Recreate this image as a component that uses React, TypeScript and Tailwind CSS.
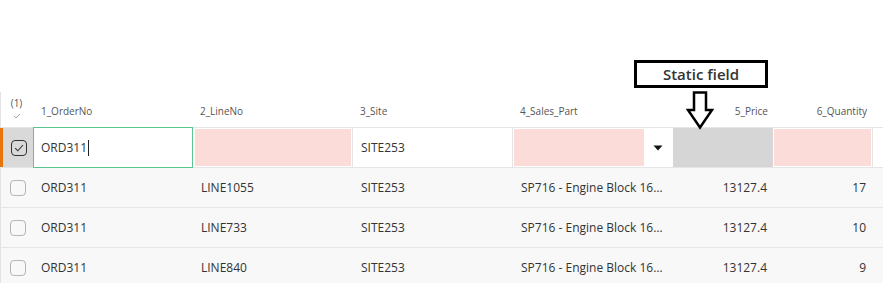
import React from "react";

const cols = "grid grid-cols-[33px_160px_160px_160px_160px_100px_100px_1fr]";

function Box({ checked }: { checked?: boolean }) {
  if (checked) {
    return (
      <div className="w-[16px] h-[16px] rounded-[4px] border border-[#333] flex items-center justify-center bg-[#d9d9d9]">
        <svg width="12" height="12" viewBox="0 0 12 12">
          <path d="M2.2 6.2 L4.8 8.8 L10 3" fill="none" stroke="#333" strokeWidth="1.1" />
        </svg>
      </div>
    );
  }
  return <div className="w-[16px] h-[16px] rounded-[4px] border border-[#b5b5b5]" />;
}

const rows = [
  { line: "LINE1055", qty: "17" },
  { line: "LINE733", qty: "10" },
  { line: "LINE840", qty: "9" },
];

export default function App() {
  return (
    <div
      className="relative w-[883px] h-[283px] bg-white overflow-hidden text-[#333]"
      style={{ fontFamily: "'Open Sans', 'Noto Sans', sans-serif" }}
    >
      <div className="h-[92px]" />
      {/* header */}
      <div className={`${cols} h-[35px] text-[10px] text-[#555] border-l border-[#e3e3e3]`}>
        <div className="flex flex-col items-center pt-[6px] leading-[11px]">
          <span className="text-[10px] -ml-[2px]">(1)</span>
          <svg width="8" height="6" viewBox="0 0 8 6" className="mt-[4px] -ml-[2px]">
            <path d="M1 3 L3 5 L7 1" fill="none" stroke="#999" strokeWidth="0.9" />
          </svg>
        </div>
        <div className="pl-[7px] flex items-center pt-[3px]">1_OrderNo</div>
        <div className="pl-[6px] flex items-center pt-[3px]">2_LineNo</div>
        <div className="pl-[6px] flex items-center pt-[3px]">3_Site</div>
        <div className="pl-[6px] flex items-center pt-[3px]">4_Sales_Part</div>
        <div className="pr-[6px] flex items-center justify-end pt-[3px]">5_Price</div>
        <div className="pr-[7px] flex items-center justify-end pt-[3px]">6_Quantity</div>
        <div />
      </div>
      {/* edit row */}
      <div className={`${cols} h-[41px] border-y border-[#e5e5e5] text-[12px]`}>
        <div className="border-l-[3px] border-[#e8740e] bg-[#d9d9d9] flex items-center justify-center pl-[1px]">
          <Box checked />
        </div>
        <div className="border border-[#5cc68f] bg-white flex items-center pl-[7px] -mt-px -mb-px">
          <span>ORD311</span>
          <span className="w-px h-[16px] bg-[#222] ml-px" />
        </div>
        <div className="p-[1px] pl-[2px] border-r border-[#e5e5e5]">
          <div className="w-full h-full bg-[#fbdcd9]" />
        </div>
        <div className="bg-white flex items-center pl-[8px] border-r border-[#e5e5e5]">SITE253</div>
        <div className="flex p-[1px] bg-white">
          <div className="w-[130px] h-full bg-[#fbdcd9]" />
          <div className="flex-1 flex items-center justify-center pr-[1px]">
            <svg width="10" height="6" viewBox="0 0 10 6">
              <path d="M0.5 0.5 L9.5 0.5 L5 5.5 Z" fill="#111" />
            </svg>
          </div>
        </div>
        <div className="bg-[#d6d6d6]" />
        <div className="p-[1px] pl-[1px] border-r border-[#e5e5e5] bg-white">
          <div className="w-full h-full bg-[#fbdcd9]" />
        </div>
        <div className="bg-white" />
      </div>
      {/* data rows */}
      {rows.map((r, i) => (
        <div
          key={i}
          className={`${cols} h-[40px] bg-[#f8f8f8] border-b border-[#e6e6e6] border-l border-l-[#e3e3e3] text-[12px] items-center`}
        >
          <div className="flex justify-center pl-[1px]">
            <Box />
          </div>
          <div className="pl-[7px]">ORD311</div>
          <div className="pl-[7px]">{r.line}</div>
          <div className="pl-[7px]">SITE253</div>
          <div className="pl-[7px] truncate pr-[8px]">SP716 - Engine Block 16V Cylinder</div>
          <div className="text-right pr-[7px]">13127.4</div>
          <div className="text-right pr-[8px]">{r.qty}</div>
          <div />
        </div>
      ))}
      {/* annotation overlay */}
      <div className="absolute left-[634px] top-[60px] w-[134px] h-[28px] border-[3px] border-black bg-white flex items-center justify-center text-[15px] font-semibold text-[#333] leading-none">
        Static field
      </div>
      <svg className="absolute left-[686px] top-[91px]" width="28" height="39" viewBox="0 0 28 39">
        <path
          d="M8 1.5 L20 1.5 L20 19 L26 19 L14 36.5 L2 19 L8 19 Z"
          fill="white"
          stroke="black"
          strokeWidth="2.5"
          strokeLinejoin="miter"
        />
      </svg>
    </div>
  );
}
